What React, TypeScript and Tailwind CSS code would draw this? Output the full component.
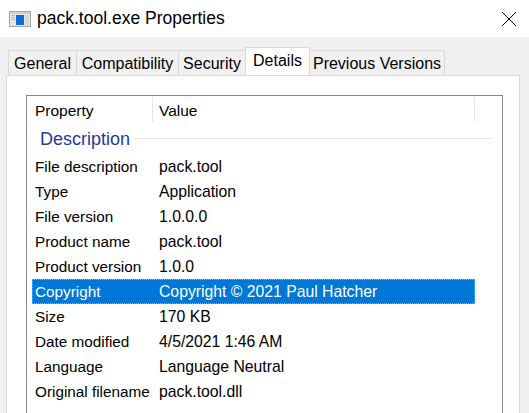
import React from 'react';

const tabs = [
  { label: 'General', w: 'w-[69px]' },
  { label: 'Compatibility', w: 'w-[103px]' },
  { label: 'Security', w: 'w-[68px]' },
  { label: 'Details', w: 'w-[65px]', active: true },
  { label: 'Previous Versions', w: 'w-[136px]' },
];

const rows: [string, string][] = [
  ['File description', 'pack.tool'],
  ['Type', 'Application'],
  ['File version', '1.0.0.0'],
  ['Product name', 'pack.tool'],
  ['Product version', '1.0.0'],
  ['Copyright', 'Copyright © 2021 Paul Hatcher'],
  ['Size', '170 KB'],
  ['Date modified', '4/5/2021 1:46 AM'],
  ['Language', 'Language Neutral'],
  ['Original filename', 'pack.tool.dll'],
];

const WindowIcon = () => (
  <svg width="22" height="16" viewBox="0 0 22 16">
    <rect x="0.5" y="0.5" width="21" height="15" fill="#e6e6e6" stroke="#a6a6a6" />
    <rect x="1" y="1" width="20" height="2" fill="#cfcfcf" />
    <rect x="2" y="4" width="4" height="1" fill="#bdbdbd" />
    <rect x="2" y="6" width="4" height="1" fill="#bdbdbd" />
    <rect x="2" y="8" width="4" height="1" fill="#bdbdbd" />
    <rect x="7" y="4" width="8" height="10" fill="#0a6ed6" />
    <rect x="16" y="4" width="4" height="10" fill="#d6d6d6" />
  </svg>
);

const App: React.FC = () => {
  return (
    <div className="w-[529px] h-[413px] overflow-hidden bg-[#f0f0f0] font-['Liberation_Sans',Arial,sans-serif] text-black">
      {/* Title bar */}
      <div className="h-[37px] bg-white flex items-center">
        <div className="ml-[9px] mt-[1px] flex">
          <WindowIcon />
        </div>
        <span className="ml-[6px] text-[17.5px] leading-none mt-[1px]">pack.tool.exe Properties</span>
        <div className="ml-auto mr-[12px] flex">
          <svg width="16" height="16" viewBox="0 0 16 16">
            <path d="M1 1L15 15M15 1L1 15" stroke="#000" strokeWidth="1" fill="none" />
          </svg>
        </div>
      </div>

      {/* Tabs */}
      <div className="pl-[8px] mt-[11px] flex items-end h-[27px] relative z-10">
        {tabs.map((t, i) =>
          t.active ? (
            <div
              key={t.label}
              className={`${t.w} h-[28px] -ml-px bg-white border border-b-0 border-[#d9d9d9] flex items-center justify-center text-[16px] pb-[1px]`}
            >
              {t.label}
            </div>
          ) : (
            <div
              key={t.label}
              className={`${t.w} h-[25px] ${i === 0 ? '' : '-ml-px'} bg-[#f0f0f0] border border-b-0 border-[#d9d9d9] flex items-center justify-center text-[16px] pt-[2px]`}
            >
              {t.label}
            </div>
          )
        )}
      </div>

      {/* Panel */}
      <div className="ml-[6px] w-[514px] h-[360px] bg-white border border-[#d9d9d9] pt-[19px] pl-[19px]">
        <div className="w-[477px] h-[340px] border border-[#828790] bg-white">
          {/* Header */}
          <div className="h-[27px] flex items-center text-[15.5px]">
            <div className="w-[125px] pl-[8px] pt-[2px]">Property</div>
            <div className="w-px h-[25px] bg-[#e5e5e5]" />
            <div className="w-[321px] pl-[6px] pt-[2px]">Value</div>
            <div className="w-px h-[25px] bg-[#e5e5e5]" />
          </div>

          {/* Group header */}
          <div className="h-[31px] flex items-center pl-[13px] pr-[10px]">
            <span className="text-[18px] text-[#1e3c9c] leading-none">Description</span>
            <div className="flex-1 h-px bg-[#e2e6ed] ml-[5px]" />
          </div>

          {/* Rows */}
          <div className="ml-[5px]">
            {rows.map(([k, v]) => {
              const sel = k === 'Copyright';
              return (
                <div
                  key={k}
                  className={`w-[443px] h-[25px] flex items-baseline whitespace-nowrap leading-[23px] ${
                    sel ? 'bg-[#0078d7] text-white border border-dotted border-[#e89a4a]' : 'border border-transparent'
                  }`}
                >
                  <div className="w-[126px] pl-[2px] text-[15.3px]">{k}</div>
                  <div className="text-[15.75px]">{v}</div>
                </div>
              );
            })}
          </div>
        </div>
      </div>
    </div>
  );
};

export default App;
